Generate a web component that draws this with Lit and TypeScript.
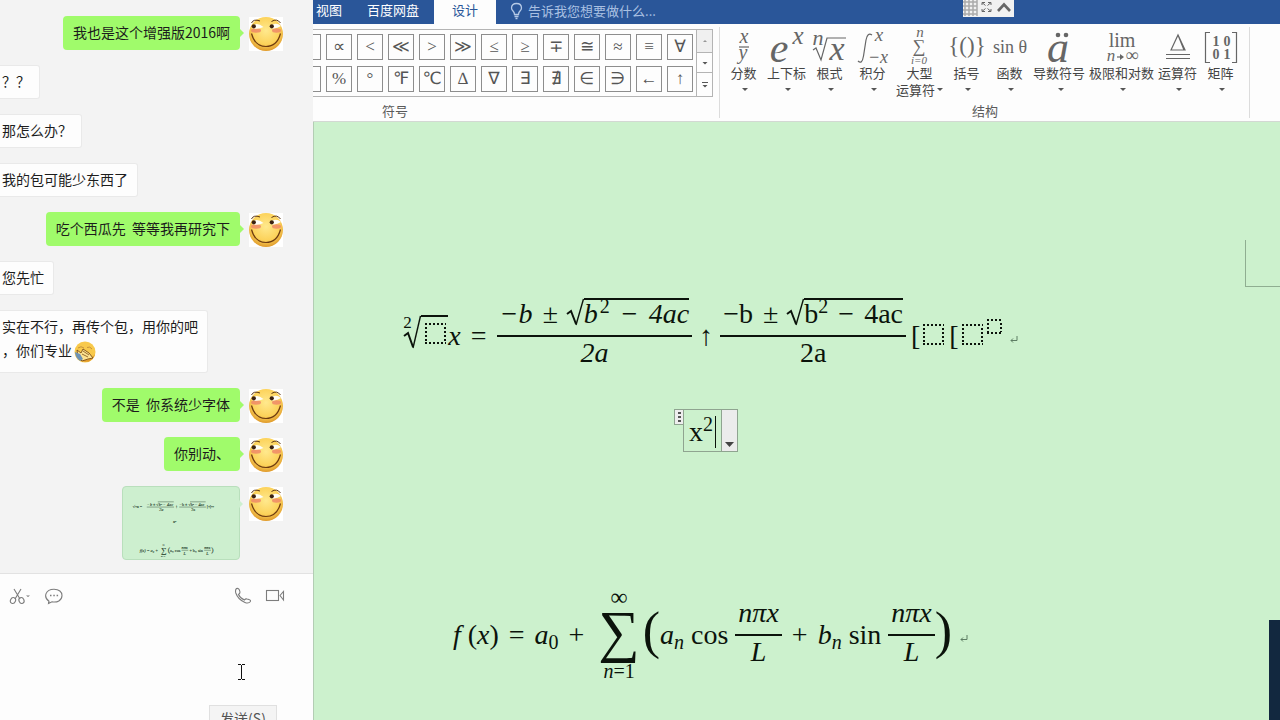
import { LitElement, html, css, svg } from "lit";
import { customElement } from "lit/decorators.js";

const avatar = html`<svg class="avatar" viewBox="0 0 34 34" role="img" aria-label="头像">
  <defs>
    <radialGradient id="skin" cx="50%" cy="40%" r="62%">
      <stop offset="0" stop-color="#ffe98e" />
      <stop offset="0.65" stop-color="#fcd25a" />
      <stop offset="1" stop-color="#dc9426" />
    </radialGradient>
  </defs>
  <rect width="34" height="34" fill="#fff" />
  <circle cx="17" cy="17" r="17" fill="url(#skin)" />
  <ellipse cx="7" cy="13.500" rx="5" ry="2.200" fill="#ee8468" opacity="0.8" />
  <ellipse cx="27.500" cy="13.500" rx="4.500" ry="2.200" fill="#ee8468" opacity="0.8" />
  <path d="M3 9Q8 4.500 14.500 10Q9 13 3 11Z" fill="#fffef6" />
  <path d="M21 9Q27 4.500 32 9Q27 12.500 21 11Z" fill="#fffef6" />
  <circle cx="4.800" cy="9.300" r="2.100" fill="#3a2010" />
  <circle cx="22.800" cy="9.300" r="2.100" fill="#3a2010" />
  <path d="M2.500 6Q4.500 1.500 11 4M22.500 4.500Q28 1 31.500 6" fill="none" stroke="#5b3513" stroke-width="1" />
  <path d="M2.500 16.500Q6 29.500 17 29.500Q28 29.500 31.500 16.500" fill="none" stroke="#6d3b10" stroke-width="1.200" />
</svg>`;

const facepalm = html`<svg class="emoji" viewBox="0 0 22 22" role="img" aria-label="捂脸">
  <circle cx="11" cy="11" r="10.500" fill="#f8c94b" />
  <path d="M2 15Q6 22 15 20.500Q20 18 21 13Q17 19 10 19Z" fill="#e09a2b" />
  <path d="M4 7Q7 4.500 10 7M13 6.500Q16 5 18 8" fill="none" stroke="#b98435" stroke-width="0.800" />
  <path d="M3 9l4 3 2-4 6 4 4 5-5 1-6 2-4-4Z" fill="#fde391" stroke="#7a4d18" stroke-width="0.900" />
  <path d="M9 10l6 4M8 13l6 3" stroke="#7a4d18" stroke-width="0.800" />
  <path d="M1 11l5 2 3 5-3 2Q1 16 1 11Z" fill="#6e93b5" />
</svg>`;

const thumbnail = html`<svg class="thumb" viewBox="0 0 800 496" role="img" aria-label="公式截图">
  <g font-family="Liberation Serif, serif" font-size="29" fill="#24402b" stroke="#24402b" stroke-width="0.700">
    <text x="68" y="146">√▫x =</text>
    <text x="166" y="128" font-style="italic">−b ± √b² − 4ac</text>
    <text x="250" y="168" font-style="italic">2a</text>
    <text x="362" y="146">↑</text>
    <text x="390" y="128">−b ± √b² − 4ac</text>
    <text x="470" y="168">2a</text>
    <text x="578" y="146">[▫[▫▫</text>
    <text x="345" y="246">x²</text>
    <text x="116" y="446" font-style="italic">f(x) = a₀ +</text>
    <text x="262" y="456" font-size="54">∑</text>
    <text x="272" y="406" font-size="20">∞</text>
    <text x="262" y="484" font-size="20">n=1</text>
    <text x="308" y="450" font-size="48">(</text>
    <text x="324" y="446">aₙ cos</text>
    <text x="404" y="426" font-style="italic">nπx</text>
    <text x="418" y="466" font-style="italic">L</text>
    <text x="458" y="446">+ bₙ sin</text>
    <text x="560" y="426" font-style="italic">nπx</text>
    <text x="574" y="466" font-style="italic">L</text>
    <text x="608" y="450" font-size="48">)</text>
  </g>
  <path d="M164 138H352M388 138H572M404 436H450M560 436H606M240 102H350M462 102H570" stroke="#24402b" stroke-width="3" />
</svg>`;

type Message = { mine: boolean; kind?: "image" | "long"; text?: string };

const messages: Message[] = [
  { mine: true, text: "我也是这个增强版2016啊" },
  { mine: false, text: "？？" },
  { mine: false, text: "那怎么办？" },
  { mine: false, text: "我的包可能少东西了" },
  { mine: true, text: "吃个西瓜先  等等我再研究下" },
  { mine: false, text: "您先忙" },
  { mine: false, kind: "long" },
  { mine: true, text: "不是  你系统少字体" },
  { mine: true, text: "你别动、" },
  { mine: true, kind: "image" },
];

@customElement("chat-panel")
class ChatPanel extends LitElement {
  static styles = css`
    :host {
      display: flex;
      flex-direction: column;
      overflow: hidden;
      background: #f3f3f3;
      font: 14px/24px "Noto Sans CJK SC", sans-serif;
      color: #1c1c1c;
    }
    .list {
      flex: 1;
      min-height: 0;
      display: flex;
      flex-direction: column;
      justify-content: flex-end;
      gap: 15px;
      padding: 0 30px 13px 0;
    }
    .row { display: flex; align-items: flex-start; gap: 9px; }
    .row.mine { justify-content: flex-end; }
    .bubble {
      position: relative;
      box-sizing: border-box;
      min-height: 34px;
      padding: 4px 10px 6px;
      border-radius: 4px;
      background: #a0fb6b;
      white-space: pre;
    }
    .theirs .bubble {
      padding: 3px 9px 5px 2px;
      border: 1px solid #e9e9e9;
      border-left: 0;
      border-radius: 0 3px 3px 0;
      background: #fdfdfd;
    }
    .theirs .long { padding-bottom: 10px; }
    .mine .bubble::after {
      content: "";
      position: absolute;
      left: 100%;
      top: 13px;
      border: 4px solid transparent;
      border-left-color: #a0fb6b;
      border-right: 0;
    }
    .mine .image { padding: 0; background: #cdefcf; border: 1px solid #b9dfbc; }
    .mine .image::after { border-left-color: #cdefcf; }
    .thumb { display: block; width: 116px; height: 72px; }
    .avatar { width: 34px; height: 34px; padding-top: 1px; }
    .mine { height: 34px; }
    .mine:last-child { height: 74px; }
    .emoji { width: 22px; height: 22px; margin-left: 2px; vertical-align: middle; }
    .line { display: block; height: 24px; }
    .composer {
      height: 146px;
      display: flex;
      flex-direction: column;
      border-top: 1px solid #e2e2e2;
      background: #fdfdfd;
      overflow: hidden;
    }
    .tools { display: flex; align-items: center; gap: 14px; height: 44px; flex: none; padding: 0 28px 0 9px; }
    .tool { padding: 0; border: 0; background: none; height: 20px; }
    .tool svg { display: block; height: 20px; fill: none; stroke: #7d7d7d; stroke-width: 1.1; }
    .push { margin-left: auto; }
    .input {
      flex: none;
      height: 87px;
      border: 0;
      padding: 0 10px;
      resize: none;
      background: none;
      font: inherit;
      outline: none;
    }
    .send {
      flex: none;
      align-self: flex-end;
      margin-right: 36px;
      width: 68px;
      height: 26px;
      padding: 0;
      border: 1px solid #e0e0e0;
      background: #f4f4f4;
      color: #555;
      font: 14px/24px "Noto Sans CJK SC", sans-serif;
    }
  `;

  body(m: Message) {
    if (m.kind === "image") return html`<div class="bubble image">${thumbnail}</div>`;
    if (m.kind === "long")
      return html`<div class="bubble long"><span class="line">实在不行，再传个包，用你的吧</span><span class="line">，你们专业${facepalm}</span></div>`;
    return html`<div class="bubble">${m.text}</div>`;
  }

  render() {
    return html`
      <div class="list">
        ${messages.map((m) => html`<div class="row ${m.mine ? "mine" : "theirs"}">${this.body(m)}${m.mine ? avatar : ""}</div>`)}
      </div>
      <div class="composer">
        <div class="tools">
          <button class="tool" aria-label="截图"><svg width="22" viewBox="0 0 22 20">
            <path d="M5 3L11 13M12 3L6 13" />
            <ellipse cx="4" cy="14.500" rx="2.500" ry="3" transform="rotate(25 4 14.500)" />
            <ellipse cx="12.500" cy="14.500" rx="2.500" ry="3" transform="rotate(-25 12.500 14.500)" />
            <path d="M17 9.500h4l-2 1.500z" fill="#777" stroke="none" /></svg></button>
          <button class="tool" aria-label="聊天记录"><svg width="18" viewBox="0 0 18 20">
            <path d="M4 15.200C-2 11 0.500 3.200 9 3.200C14 3.200 17 6 17 9.500C17 14.500 12 16.800 7 15.800L3.500 17.500Z" />
            <path d="M5 9.600h1.500M8.300 9.600h1.500M11.600 9.600h1.500" stroke-width="1.500" /></svg></button>
          <button class="tool push" aria-label="语音通话"><svg width="18" viewBox="-1 0 18 20">
            <path d="M2.500 2.500Q5 1.500 6 6Q6 7.500 4.500 8.500Q6 12 10.500 14Q11.500 12.500 13 13Q17.500 14 16.500 15.500Q14.500 18 11 16.500Q4 13.500 1.800 7Q1 4 2.500 2.500Z" /></svg></button>
          <button class="tool" aria-label="视频通话"><svg width="20" viewBox="0 0 20 20">
            <rect x="1.500" y="4.500" width="12" height="10" /><path d="M15 9.500L18.500 5.500V14Z" /></svg></button>
        </div>
        <textarea class="input" aria-label="输入消息"></textarea>
        <button class="send">发送(S)</button>
      </div>
    `;
  }
}

const symbols = [
  ["", "∝", "<", "≪", ">", "≫", "≤", "≥", "∓", "≅", "≈", "≡", "∀"],
  ["", "%", "°", "℉", "℃", "∆", "∇", "∃", "∄", "∈", "∋", "←", "↑"],
];

const glyph = (x: number, y: number, size: number, text: string, italic = true) =>
  svg`<text x=${x} y=${y} font-size=${size} font-style=${italic ? "italic" : "normal"} text-anchor="middle">${text}</text>`;

const structures = [
  { label: "分数", art: svg`${glyph(22, 13, 20, "x")}<path d="M17 17h10" />${glyph(21, 29, 20, "y")}` },
  { label: "上下标", art: svg`${glyph(14, 32, 42, "e")}${glyph(33, 14, 25, "x")}` },
  { label: "根式", art: svg`${glyph(10, 15, 22, "n")}${glyph(29, 30, 34, "x")}<path d="M5 20l3-2 5 12L19 8H38" stroke-width="1.5" />` },
  { label: "积分", art: svg`<path d="M7 31Q11 35 12.500 26L15 10Q16.500 2 21 5" stroke-width="1.800" />${glyph(28, 11, 19, "x")}${glyph(27, 33, 18, "−x")}` },
  { label: "大型", second: "运算符", art: svg`${glyph(22, 7, 15, "n")}${glyph(21, 22, 18, "∑", false)}${glyph(21, 34, 11, "i=0")}` },
  { label: "括号", art: svg`${glyph(22, 23, 23, "{()}", false)}` },
  { label: "函数", art: svg`${glyph(22, 23, 18, "sin θ", false)}` },
  { label: "导数符号", art: svg`${glyph(21, 32, 44, "a")}<circle cx="21" cy="5" r="2.300" /><circle cx="29" cy="5" r="2.300" />` },
  { label: "极限和对数", art: svg`${glyph(22, 17, 20, "lim", false)}${glyph(11, 31, 17, "n")}<path d="M17 27h5" /><path class="solid" d="M20 24l4 3-4 3z" />${glyph(32, 31, 18, "∞", false)}` },
  { label: "运算符", art: svg`<path d="M15 20L22 5l7 15zM22 5l6 15" stroke-width="1.200" /><path d="M10 24.500h24M10 28.500h24" />` },
  { label: "矩阵", art: svg`<path d="M11 2.500H6.500V32.500H11M33 2.500H37.500V32.500H33" stroke-width="1.800" /><g font-weight="bold">${glyph(17, 16, 14, "1", false)}${glyph(28, 16, 14, "0", false)}${glyph(17, 29, 14, "0", false)}${glyph(28, 29, 14, "1", false)}</g>` },
];

@customElement("ribbon-bar")
class RibbonBar extends LitElement {
  static styles = css`
    :host {
      display: block;
      font: 13px/16px "Noto Sans CJK SC", sans-serif;
      color: #444;
    }
    button { font: inherit; color: inherit; border: 0; background: none; padding: 0; }
    .tabs { position: relative; display: flex; height: 24px; background: #2a5699; color: #fff; overflow: hidden; }
    .tab { height: 24px; padding: 0 15px 4px; }
    .tab.first { padding-left: 3px; }
    .tab.wide { padding: 0 15px 4px 10px; }
    .tab.active { padding: 0 18px 4px; background: #fdfdfd; color: #2a5699; }
    .ask { display: flex; align-items: center; gap: 5px; height: 22px; padding-left: 14px; color: #a9c0e2; }
    .ask svg { width: 13px; height: 18px; fill: none; stroke: #b5c9e6; stroke-width: 1.3; }
    .remote {
      position: absolute;
      right: 266px;
      top: 0;
      display: flex;
      height: 17px;
      background: #f1f1f1;
    }
    .remote svg { display: block; width: 51px; height: 17px; }
    .body { display: flex; height: 97px; border-bottom: 1px solid #d3d8d3; background: #fdfdfd; overflow: hidden; }
    .group { position: relative; display: flex; flex-direction: column; }
    .group::after { content: ""; position: absolute; right: 0; top: 3px; height: 91px; border-right: 1px solid #dcdcdc; }
    .clip { display: flex; justify-content: flex-end; flex: none; width: 407px; overflow: hidden; }
    .clip .group { flex: none; width: 650px; }
    .gallery { display: flex; align-self: flex-end; margin: 5px 7px 0 0; border: 1px solid #b4b4b4; }
    .grid { display: grid; grid-template-columns: repeat(13, 26px); gap: 5px; padding: 4px 3px 4px 4px; }
    .sym {
      box-sizing: border-box;
      width: 26px;
      height: 26px;
      border: 1px solid #8d8d8d;
      background: #fdfdfd;
      color: #555;
      font: 17px/22px "Liberation Serif", "DejaVu Sans", serif;
    }
    .scroll { display: grid; grid-template-rows: 22px 20px 24px; width: 15px; border-left: 1px solid #b4b4b4; }
    .scroll button { display: grid; place-items: center; }
    .scroll button + button { border-top: 1px solid #b4b4b4; }
    .scroll .off { background: #e8e8e8; opacity: 0.6; }
    .scroll svg { width: 8px; height: 8px; fill: #555; }
    .label { margin-top: auto; height: 18px; text-align: center; line-height: 16px; color: #5a5a5a; }
    .items { display: flex; padding: 3px 8px 0 2px; }
    .item {
      display: flex;
      flex-direction: column;
      align-items: center;
      min-width: 43px;
      padding: 0 2px;
      line-height: 17px;
      white-space: nowrap;
    }
    .item .art { width: 40px; height: 37px; margin: 0 -1px; fill: #666; overflow: visible; font-family: "Liberation Serif", serif; }
    .item .art path { fill: none; stroke: #666; stroke-width: 1.2; }
    .item .art .solid { fill: #666; stroke: none; }
    .second { display: flex; align-items: center; gap: 2px; height: 17px; }
    .arrow { width: 6px; height: 3px; fill: #555; }
    .second .arrow:only-child { margin-left: 3px; }
  `;

  render() {
    const arrow = html`<svg class="arrow" viewBox="0 0 6 3"><path d="M0 0h6L3 3z" /></svg>`;
    return html`
      <div class="tabs">
        <button class="tab first">视图</button>
        <button class="tab wide">百度网盘</button>
        <button class="tab active">设计</button>
        <label class="ask"><svg viewBox="0 0 13 18">
          <path d="M4.500 12.500Q4.500 10.500 3 9Q1.500 7.500 1.500 6Q1.500 1.500 6.500 1.500Q11.500 1.500 11.500 6Q11.500 7.500 10 9Q8.500 10.500 8.500 12.500ZM4.500 14.500h4M5.500 16.500h2" /></svg>告诉我您想要做什么...</label>
        <div class="remote"><svg viewBox="0 0 51 17" aria-hidden="true">
          <path d="M0 2h14M0 6h14M0 10h14M0 14h14M2 0v16M6 0v16M10 0v16M14 0v16" stroke="#aaa" stroke-width="1.500" />
          <path d="M19 5V2.500h3M25 2.500h3V5M28 9v2.500h-3M22 11.500h-3V9M19 2.500l3.500 3M28 2.500l-3.500 3M19 11.500l3.500-3M28 11.500l-3.500-3" fill="none" stroke="#666" />
          <path d="M35 11l6-6.500 6 6.500" fill="none" stroke="#666" stroke-width="2.600" /></svg></div>
      </div>
      <div class="body">
        <div class="clip"><div class="group">
          <div class="gallery">
            <div class="grid">${symbols.flat().map((s) => html`<button class="sym">${s}</button>`)}</div>
            <div class="scroll">
              <button class="off" aria-label="上一行"><svg viewBox="0 0 8 8"><path d="M2 5h4L4 3z" /></svg></button>
              <button aria-label="下一行"><svg viewBox="0 0 8 8"><path d="M1.500 3h5L4 5.500z" /></svg></button>
              <button aria-label="更多"><svg viewBox="0 0 8 8"><path d="M1 1h6v1H1zM1.500 4h5L4 6.500z" /></svg></button>
            </div>
          </div>
          <div class="label">符号</div>
        </div></div>
        <div class="group">
          <div class="items">
            ${structures.map((s) => html`<button class="item">
              <svg class="art" viewBox="2 -3 40 37" aria-hidden="true">${s.art}</svg>
              <span>${s.label}</span>
              <span class="second">${s.second ? html`<span>${s.second}</span>` : ""}${arrow}</span>
            </button>`)}
          </div>
          <div class="label">结构</div>
        </div>
      </div>
    `;
  }
}

@customElement("doc-page")
class DocPage extends LitElement {
  static styles = css`
    :host {
      position: relative;
      display: block;
      overflow: hidden;
      box-sizing: border-box;
      padding: 174px 189px 0 0;
      border-left: 1px solid #b3cdb4;
      background: #ccf1cd;
      color: #0b130b;
      font: 28px/32px "Liberation Serif", serif;
    }
    .line { display: flex; align-items: center; justify-content: center; white-space: nowrap; }
    .first { height: 80px; }
    .edit { height: 42px; margin: 33px 0 139px 7px; }
    .last { height: 90px; }
    .it { font-style: italic; }
    .op { margin: 0 10px; }
    .frac { display: flex; flex-direction: column; }
    .num { display: flex; justify-content: center; align-items: flex-end; box-sizing: border-box; height: 39px; padding: 0 3px 7px; line-height: 28px; }
    .den { height: 39px; border-top: 2px solid #0b130b; text-align: center; }
    .root { display: flex; align-items: flex-end; margin-left: -2px; }
    .hook { display: block; width: 18px; height: 30px; fill: none; stroke: #0b130b; }
    .under { height: 28px; border-top: 2px solid #0b130b; }
    sup, sub { font-size: 20px; line-height: 0; font-style: normal; }
    sup { vertical-align: 10px; }
    sub { vertical-align: -5px; }
    sub.it { font-style: italic; }
    .it sup { margin-left: 2px; }
    .slot { width: 21px; height: 21px; flex: none; margin-bottom: 4px; }
    .slot.small { align-self: flex-start; width: 15px; height: 15px; margin: 23px 0 0 4px; }
    .slot path { fill: none; stroke: #0b130b; stroke-width: 2; stroke-dasharray: 2 2; }
    .index { display: flex; align-items: flex-start; height: 42px; position: relative; }
    .index .hook { height: 34px; }
    .degree { position: absolute; left: 0; top: 0; font-size: 17px; line-height: 16px; }
    .cube { display: block; padding: 6px 2px 0 4px; border-top: 2px solid #0b130b; }
    .cube .slot { display: block; }
    .bracket { margin: 0 3px 0 5px; }
    .up { margin: 0 7px; }
    .mark { width: 0; overflow: visible; }
    .mark svg { display: block; width: 8px; height: 8px; margin: 8px 0 0 8px; fill: none; stroke: #5d7d63; }
    .sum { display: flex; flex-direction: column; align-items: center; margin: 0 3px 0 4px; }
    .sum .top { font-size: 24px; line-height: 14px; }
    .sum .big { height: 58px; font-size: 58px; line-height: 56px; }
    .sum .bottom { font-size: 20px; line-height: 18px; }
    .paren { font-size: 52px; line-height: 52px; height: 60px; }
    .handle { align-self: flex-start; box-sizing: border-box; width: 9px; height: 16px; border: 1px solid #8fa490; border-right: 0; background: #eee; }
    .handle svg { display: block; width: 8px; height: 14px; fill: #555; }
    .box { display: flex; box-sizing: border-box; height: 43px; border: 1px solid #8fa490; }
    .value { display: flex; align-items: center; padding: 4px 5px 0; }
    .caret { height: 32px; border-left: 1px solid #0b130b; margin-left: 2px; }
    .drop { display: flex; align-items: flex-end; width: 16px; padding: 0 0 4px 3px; border: 0; border-left: 1px solid #8fa490; background: #ececec; }
    .drop svg { display: block; width: 9px; height: 5px; fill: #444; }
    .corner { position: absolute; right: 0; top: 118px; width: 34px; height: 46px; border: solid #8fae91; border-width: 0 0 1px 1px; }
    .dark { position: absolute; right: 0; bottom: 0; width: 11px; height: 100px; background: #12283f; }
  `;

  slotBox(small = false) {
    return html`<svg class="slot ${small ? "small" : ""}" viewBox=${small ? "0 0 15 15" : "0 0 21 21"}>
      <path d=${small ? "M0 1H15M0 14H15M1 4V13M14 4V13" : "M0 1H21M0 20H21M1 4V18M20 4V18"} /></svg>`;
  }

  quadratic(cls: string) {
    return html`<span class="frac ${cls}">
      <span class="num"><span>−b</span><span class="op">±</span><span class="root"
        ><svg class="hook" viewBox="0 0 18 30"><path d="M1 16l4-3 5 13" stroke-width="2" /><path d="M10 27L17.500 1" stroke-width="1.400" /></svg
        ><span class="under">b<sup>2</sup><span class="op">−</span>4ac</span></span></span>
      <span class="den">2a</span>
    </span>`;
  }

  npixOverL() {
    return html`<span class="frac it"><span class="num">nπx</span><span class="den">L</span></span>`;
  }

  render() {
    const mark = html`<span class="mark"><svg viewBox="0 0 8 8"><path d="M7 0V4.500H1M3 2.500L1 4.500L3 6.500" /></svg></span>`;
    return html`
      <div class="line first">
        <span class="index"><span class="degree">2</span
          ><svg class="hook" viewBox="0 0 18 34"><path d="M1 21l4-3 5 14" stroke-width="2" /><path d="M10 33L17.500 1" stroke-width="1.400" /></svg
          ><span class="cube">${this.slotBox()}</span></span>
        <span class="it">x</span><span class="op">=</span>
        ${this.quadratic("it")}
        <span class="up">↑</span>
        ${this.quadratic("")}
        <span class="bracket">[</span>${this.slotBox()}<span class="bracket">[</span>${this.slotBox()}${this.slotBox(true)}
        ${mark}
      </div>
      <div class="line edit">
        <span class="handle"><svg viewBox="0 0 8 14"><path d="M3 2h3v2H3zM3 6h3v2H3zM3 10h3v2H3z" /></svg></span>
        <div class="box">
          <span class="value"><span>x<sup>2</sup></span><span class="caret"></span></span>
          <button class="drop" aria-label="公式选项"><svg viewBox="0 0 9 5"><path d="M0 0h9L4.500 5z" /></svg></button>
        </div>
      </div>
      <div class="line last">
        <span><span class="it">f</span> (<span class="it">x</span>)</span><span class="op">=</span>
        <span><span class="it">a</span><sub>0</sub></span><span class="op">+</span>
        <span class="sum"><span class="top">∞</span><span class="big">∑</span><span class="bottom"><span class="it">n</span>=1</span></span>
        <span class="paren">(</span><span><span class="it">a</span><sub class="it">n</sub> cos&nbsp;</span>
        ${this.npixOverL()}
        <span class="op">+</span><span><span class="it">b</span><sub class="it">n</sub> sin&nbsp;</span>
        ${this.npixOverL()}
        <span class="paren">)</span>
        ${mark}
      </div>
      <div class="corner"></div>
      <div class="dark"></div>
    `;
  }
}

@customElement("app-root")
class AppRoot extends LitElement {
  static styles = css`
    :host { display: grid; grid-template-columns: 313px 1fr; position: relative; height: 100vh; overflow: hidden; }
    .office { display: flex; flex-direction: column; min-width: 0; }
    .page { flex: 1; min-height: 0; }
    .pointer { position: absolute; left: 237px; top: 664px; width: 9px; height: 16px; fill: none; stroke: #111; }
  `;

  render() {
    return html`
      <chat-panel></chat-panel>
      <main class="office">
        <ribbon-bar></ribbon-bar>
        <doc-page class="page"></doc-page>
      </main>
      <svg class="pointer" viewBox="0 0 9 16"><path d="M1 0.500H4M5 0.500H8M4.500 1V15M1 15.500H4M5 15.500H8" /></svg>
    `;
  }
}
